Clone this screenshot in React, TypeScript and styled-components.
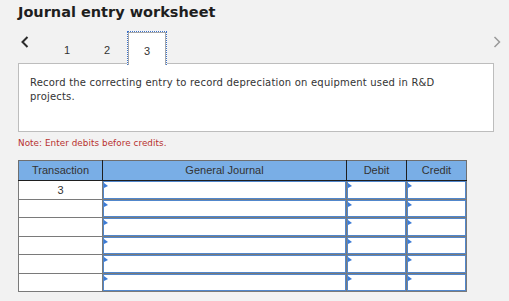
import styled, { createGlobalStyle } from "styled-components";

const GlobalStyle = createGlobalStyle`
  body {
    margin: 0;
    background: #f2f2f2;
  }
`;

const Page = styled.div`
  width: 476px;
  padding: 4px 0 9px 18px;
  font-family: "DejaVu Sans", Verdana, sans-serif;
  color: #333;
`;

const Title = styled.h1`
  margin: 0;
  font-size: 14.5px;
  line-height: 17px;
  font-weight: bold;
  color: #1e1e1e;
`;

const TabBar = styled.div`
  display: flex;
  align-items: flex-start;
  height: 32px;
  margin: 10px -7px 0 0;
`;

const Arrow = styled.button<{ $muted?: boolean }>`
  display: flex;
  width: ${(p) => (p.$muted ? "8px" : "29px")};
  height: 32px;
  padding: 5px 0 0 ${(p) => (p.$muted ? "0" : "3px")};
  margin-left: ${(p) => (p.$muted ? "auto" : "0")};
  border: 0;
  background: none;
  color: ${(p) => (p.$muted ? "#9a9a9a" : "#2b2b2b")};
`;

const Tab = styled.button<{ $active?: boolean }>`
  position: relative;
  z-index: 1;
  width: 40px;
  height: ${(p) => (p.$active ? "34px" : "32px")};
  padding: 5px 0 0;
  border: 1px dotted ${(p) => (p.$active ? "#3a70c8" : "transparent")};
  border-bottom: 0;
  background: ${(p) => (p.$active ? "#fff" : "transparent")};
  box-shadow: ${(p) =>
    p.$active ? "inset 1px 0 #a9a9a9, inset -1px 0 #a9a9a9, inset 0 1px #a9a9a9" : "none"};
  font: 11px/13px "Liberation Sans", Arial, sans-serif;
  color: #333;
`;

const Prompt = styled.div`
  box-sizing: border-box;
  height: 69px;
  padding: 12px 11px 0;
  background: #fff;
  border: 1px solid #bdbdbd;
  font-size: 10px;
  line-height: 14px;
  letter-spacing: 0.2px;
  color: #333;
`;

const Note = styled.p`
  margin: 5px 0 0;
  font-size: 8.8px;
  line-height: 12px;
  letter-spacing: 0.06px;
  color: #b8312f;
`;

const Sheet = styled.table`
  width: 449px;
  margin-top: 11px;
  table-layout: fixed;
  border-collapse: collapse;
  border: 1px solid #6f6f6f;
  font: 11px/13px "Liberation Sans", Arial, sans-serif;
  color: #333;
`;

const HeadCell = styled.th<{ $w: number }>`
  width: ${(p) => p.$w}px;
  height: 19px;
  padding: 0;
  background: #79aee6;
  border: 1px solid #1f1f1f;
  border-top-color: #6f6f6f;
  font-weight: normal;
  text-align: center;
  vertical-align: middle;

  &:first-child {
    border-left-color: #6f6f6f;
  }
  &:last-child {
    border-right-color: #6f6f6f;
  }
`;

const Cell = styled.td`
  padding: 0;
  background: #fff;
  border: 1px solid #7a7a7a;
  text-align: center;
  vertical-align: top;
`;

const RowLabel = styled.div<{ $h: number }>`
  height: ${(p) => p.$h}px;
  line-height: ${(p) => p.$h}px;
`;

const EntryField = styled.div<{ $h: number }>`
  position: relative;
  box-sizing: border-box;
  height: ${(p) => p.$h}px;
  border: 1px solid #5187cc;
  background: #fff;
`;

const Flag = styled.span`
  position: absolute;
  left: 0;
  top: 1px;
  width: 0;
  height: 0;
  border-top: 3px solid transparent;
  border-bottom: 2px solid transparent;
  border-left: 4px solid #3c7bd6;
`;

const columns = [
  { label: "Transaction", w: 83 },
  { label: "General Journal", w: 243 },
  { label: "Debit", w: 59 },
  { label: "Credit", w: 59 },
];

const rows = ["3", "", "", "", "", ""];

function Field({ h }: { h: number }) {
  return (
    <EntryField $h={h}>
      <Flag />
    </EntryField>
  );
}

export default function App() {
  return (
    <Page>
      <GlobalStyle />
      <Title>Journal entry worksheet</Title>
      <TabBar>
        <Arrow aria-label="previous">
          <svg width="8" height="12" viewBox="0 0 8 12">
            <polyline points="6.5,1 1.5,6 6.5,11" fill="none" stroke="currentColor" strokeWidth="2" />
          </svg>
        </Arrow>
        <Tab>1</Tab>
        <Tab>2</Tab>
        <Tab $active>3</Tab>
        <Arrow $muted aria-label="next">
          <svg width="8" height="12" viewBox="0 0 8 12">
            <polyline points="1.5,1 6.5,6 1.5,11" fill="none" stroke="currentColor" strokeWidth="1.5" />
          </svg>
        </Arrow>
      </TabBar>
      <Prompt>
        Record the correcting entry to record depreciation on equipment used in R&amp;D projects.
      </Prompt>
      <Note>Note: Enter debits before credits.</Note>
      <Sheet>
        <thead>
          <tr>
            {columns.map((c) => (
              <HeadCell key={c.label} $w={c.w}>
                {c.label}
              </HeadCell>
            ))}
          </tr>
        </thead>
        <tbody>
          {rows.map((t, i) => {
            const h = i % 2 === 0 ? 18 : 17;
            return (
              <tr key={i}>
                <Cell>
                  <RowLabel $h={h}>{t}</RowLabel>
                </Cell>
                <Cell>
                  <Field h={h} />
                </Cell>
                <Cell>
                  <Field h={h} />
                </Cell>
                <Cell>
                  <Field h={h} />
                </Cell>
              </tr>
            );
          })}
        </tbody>
      </Sheet>
    </Page>
  );
}
